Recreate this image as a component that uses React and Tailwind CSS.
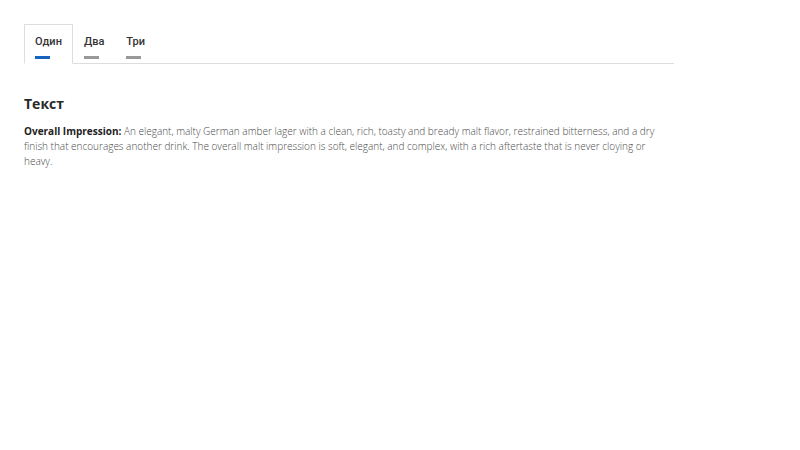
export default function App() {
  const tabs = ['Один', 'Два', 'Три'];
  const active = 0;

  return (
    <div className="min-h-screen bg-white font-['Open_Sans',sans-serif] text-[#333]">
      <div className="w-[650px] ml-6 pt-6">
        {/* Tabs */}
        <div className="flex border-b border-[#ddd]">
          {tabs.map((tab, i) => (
            <div
              key={tab}
              className={`h-10 px-[10px] flex flex-col justify-center -mb-px ${
                i === active
                  ? 'border border-[#ddd] border-b-white bg-white'
                  : 'border border-transparent'
              }`}
            >
              <span className="font-['Roboto',sans-serif] text-[11px] font-medium leading-4 text-[#333] mt-1">{tab}</span>
              <span
                className={`block w-[15px] h-[3px] mt-[6px] ${
                  i === active ? 'bg-[#1565c0]' : 'bg-[#999]'
                }`}
              ></span>
            </div>
          ))}
        </div>

        {/* Content */}
        <h2 className="mt-[30px] text-[14px] font-bold leading-5 text-[#2a2a2a]">Текст</h2>
        <p className="mt-[10px] text-[10px] leading-[15px] font-light text-[#4a4a4a]">
          <strong className="font-bold text-[#222]">Overall Impression:</strong> An elegant, malty German amber lager with a clean, rich, toasty and bready malt flavor, restrained bitterness, and a dry finish that encourages another drink. The overall malt impression is soft, elegant, and complex, with a rich aftertaste that is never cloying or heavy.
        </p>
      </div>
    </div>
  );
}
